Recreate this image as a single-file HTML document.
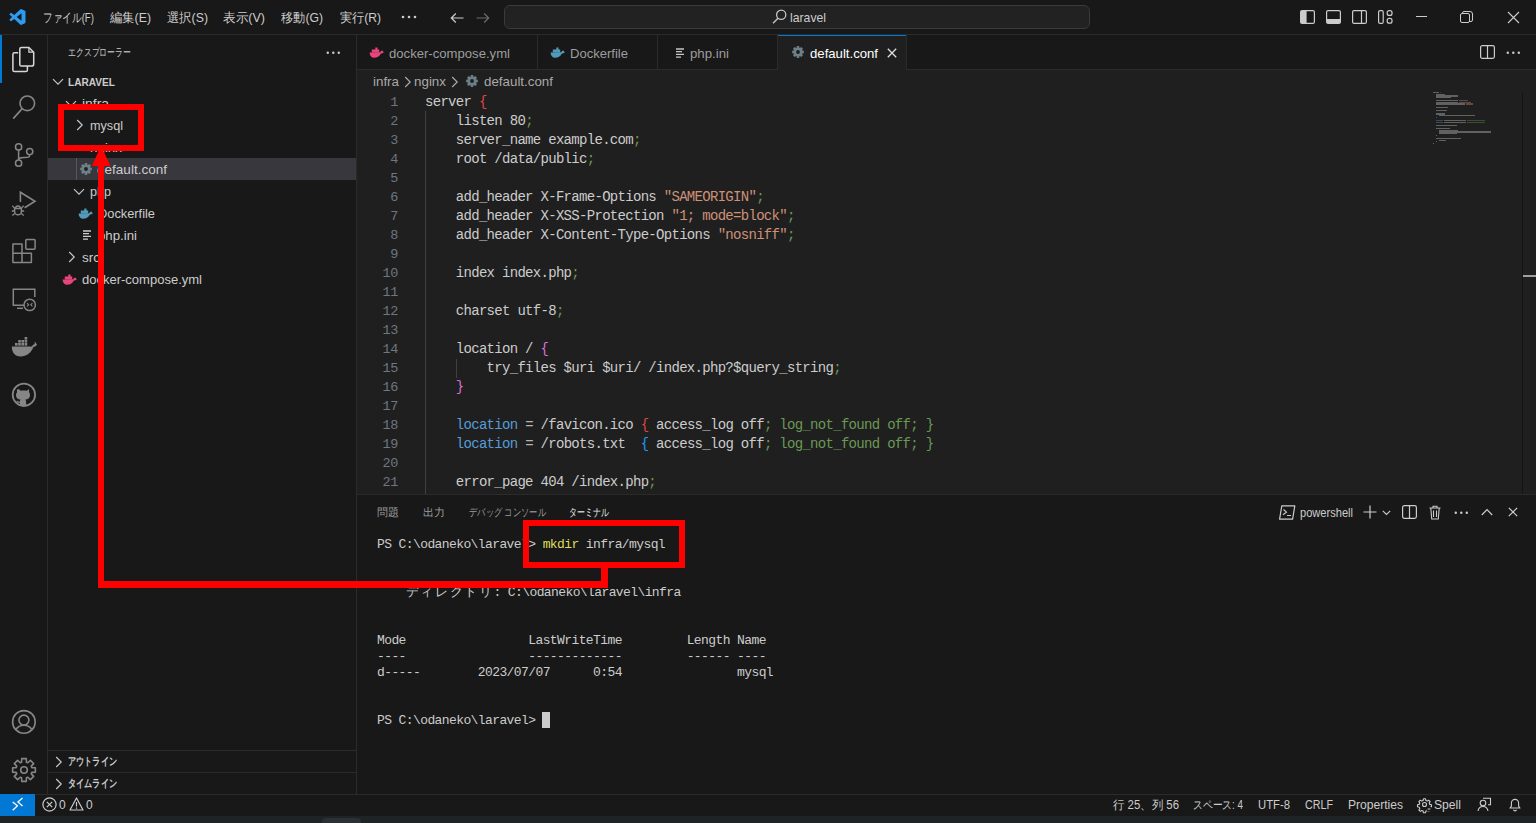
<!DOCTYPE html>
<html><head><meta charset="utf-8"><title>vscode</title><style>*{box-sizing:border-box;margin:0;padding:0}
html,body{width:1536px;height:823px;overflow:hidden;background:#181818}
body{position:relative;font-family:"Liberation Sans",sans-serif;color:#cccccc;font-size:13px}
.a{position:absolute;white-space:pre}
svg.a{overflow:visible}
</style></head><body>
<div class="a" style="left:0px;top:0px;width:1536px;height:34px;background:#181818;"></div>
<div class="a" style="left:0px;top:34px;width:1536px;height:1px;background:#2b2b2b;"></div>
<div class="a" style="left:0px;top:35px;width:47px;height:759px;background:#181818;"></div>
<div class="a" style="left:47px;top:35px;width:1px;height:759px;background:#2b2b2b;"></div>
<div class="a" style="left:48px;top:35px;width:308px;height:759px;background:#181818;"></div>
<div class="a" style="left:356px;top:35px;width:1px;height:759px;background:#2b2b2b;"></div>
<div class="a" style="left:357px;top:35px;width:1179px;height:34px;background:#181818;"></div>
<div class="a" style="left:357px;top:69px;width:1179px;height:1px;background:#2b2b2b;"></div>
<div class="a" style="left:357px;top:70px;width:1179px;height:424px;background:#1f1f1f;"></div>
<div class="a" style="left:357px;top:494px;width:1179px;height:1px;background:#2b2b2b;"></div>
<div class="a" style="left:357px;top:495px;width:1179px;height:299px;background:#181818;"></div>
<div class="a" style="left:0px;top:794px;width:1536px;height:1px;background:#2b2b2b;"></div>
<div class="a" style="left:0px;top:795px;width:1536px;height:21px;background:#181818;"></div>
<div class="a" style="left:0px;top:816px;width:1536px;height:7px;background:#1e2326;"></div>
<div class="a" style="left:322px;top:818px;width:39px;height:5px;background:#2a3034;border-radius:4px 4px 0 0"></div>
<svg class="a" style="left:9px;top:9px" width="17" height="16" viewBox="0 0 100 100"><path fill="#2d9bf0" d="M96.46 10.8L75.86.87a6.23 6.23 0 0 0-7.1 1.2L29.35 38.04 12.19 25.01a4.16 4.16 0 0 0-5.32.24l-5.5 5a4.17 4.17 0 0 0 0 6.16L16.26 50 1.37 63.58a4.17 4.17 0 0 0 0 6.16l5.5 5a4.16 4.16 0 0 0 5.32.24l17.16-13.03 39.41 35.97a6.22 6.22 0 0 0 7.1 1.2l20.6-9.92A6.25 6.25 0 0 0 100 83.56V16.44a6.25 6.25 0 0 0-3.54-5.64zM75.01 72.7L45.11 50l29.9-22.7v45.4z"/></svg>
<div class="a" style="left:43px;top:9px;font-size:13px;line-height:17px;color:#cccccc;font-family:'Liberation Sans',sans-serif;"><span id="f1" class="fs" style="display:inline-block;transform-origin:0 0;transform:scaleX(0.7433)">ファイル(F)</span></div>
<div class="a" style="left:110px;top:9px;font-size:13px;line-height:17px;color:#cccccc;font-family:'Liberation Sans',sans-serif;"><span id="f2" class="fs" style="display:inline-block;transform-origin:0 0;transform:scaleX(0.9459)">編集(E)</span></div>
<div class="a" style="left:167px;top:9px;font-size:13px;line-height:17px;color:#cccccc;font-family:'Liberation Sans',sans-serif;"><span id="f3" class="fs" style="display:inline-block;transform-origin:0 0;transform:scaleX(0.9459)">選択(S)</span></div>
<div class="a" style="left:223px;top:9px;font-size:13px;line-height:17px;color:#cccccc;font-family:'Liberation Sans',sans-serif;"><span id="f4" class="fs" style="display:inline-block;transform-origin:0 0;transform:scaleX(0.9690)">表示(V)</span></div>
<div class="a" style="left:281px;top:9px;font-size:13px;line-height:17px;color:#cccccc;font-family:'Liberation Sans',sans-serif;"><span id="f5" class="fs" style="display:inline-block;transform-origin:0 0;transform:scaleX(0.9379)">移動(G)</span></div>
<div class="a" style="left:340px;top:9px;font-size:13px;line-height:17px;color:#cccccc;font-family:'Liberation Sans',sans-serif;"><span id="f6" class="fs" style="display:inline-block;transform-origin:0 0;transform:scaleX(0.9308)">実行(R)</span></div>
<svg class="a" style="left:401px;top:15px" width="16" height="4" viewBox="0 0 16 4"><circle cx="2" cy="2" r="1.3" fill="#ccc"/><circle cx="8" cy="2" r="1.3" fill="#ccc"/><circle cx="14" cy="2" r="1.3" fill="#ccc"/></svg>
<svg class="a" style="left:449px;top:10px" width="16" height="16" viewBox="0 0 16 16"><path d="M14.5 8H2.3M6.8 3.5L2.3 8 6.8 12.5" stroke="#cccccc" stroke-width="1.2" fill="none"/></svg>
<svg class="a" style="left:475px;top:10px" width="16" height="16" viewBox="0 0 16 16"><path d="M1.5 8h12.2M9.2 3.5L13.7 8 9.2 12.5" stroke="#6b6b6b" stroke-width="1.2" fill="none"/></svg>
<div class="a" style="left:504px;top:5px;width:586px;height:24px;background:#222222;border:1px solid #3a3a3a;border-radius:6px"></div>
<svg class="a" style="left:772px;top:9px" width="15" height="15" viewBox="0 0 15 15"><circle cx="9.2" cy="5.8" r="4.6" stroke="#c4c4c4" stroke-width="1.3" fill="none"/><path d="M6 9.2L1 14.3" stroke="#c4c4c4" stroke-width="1.4"/></svg>
<div class="a" style="left:790px;top:9px;font-size:13px;line-height:17px;color:#cccccc;font-family:'Liberation Sans',sans-serif;"><span id="f7" class="fs" style="display:inline-block;transform-origin:0 0;transform:scaleX(0.9400)">laravel</span></div>
<svg class="a" style="left:1300px;top:10px" width="15" height="14" viewBox="0 0 15 14"><rect x="0.6" y="0.6" width="13.8" height="12.8" rx="1.5" stroke="#cccccc" stroke-width="1.2" fill="none"/><rect x="1" y="1" width="5" height="12" fill="#cccccc"/><path d="M6 1v12" stroke="#cccccc" stroke-width="1.2"/></svg>
<svg class="a" style="left:1326px;top:10px" width="15" height="14" viewBox="0 0 15 14"><rect x="0.6" y="0.6" width="13.8" height="12.8" rx="1.5" stroke="#cccccc" stroke-width="1.2" fill="none"/><rect x="1" y="9" width="13" height="4" fill="#cccccc"/></svg>
<svg class="a" style="left:1352px;top:10px" width="15" height="14" viewBox="0 0 15 14"><rect x="0.6" y="0.6" width="13.8" height="12.8" rx="1.5" stroke="#cccccc" stroke-width="1.2" fill="none"/><path d="M9.5 1v12" stroke="#cccccc" stroke-width="1.2"/></svg>
<svg class="a" style="left:1378px;top:10px" width="15" height="14" viewBox="0 0 15 14"><rect x="0.6" y="0.6" width="4.6" height="12.8" rx="1.5" stroke="#cccccc" stroke-width="1.2" fill="none"/><rect x="9.2" y="0.6" width="4.8" height="4.8" rx="2" stroke="#cccccc" stroke-width="1.2" fill="none"/><rect x="9.2" y="8.4" width="4.8" height="4.8" rx="2" stroke="#cccccc" stroke-width="1.2" fill="none"/></svg>
<div class="a" style="left:1416px;top:16px;width:11px;height:1px;background:#cccccc;"></div>
<svg class="a" style="left:1460px;top:11px" width="13" height="12" viewBox="0 0 13 12"><rect x="0.5" y="2.5" width="9" height="9" rx="1.5" stroke="#cccccc" stroke-width="1" fill="none"/><path d="M2.5 2.5V2A1.5 1.5 0 0 1 4 0.5h6A2.5 2.5 0 0 1 12.5 3v6A1.5 1.5 0 0 1 11 10.5h-1.5" stroke="#cccccc" stroke-width="1" fill="none"/></svg>
<svg class="a" style="left:1507px;top:11px" width="13" height="13" viewBox="0 0 13 13"><path d="M1 1L12 12M12 1L1 12" stroke="#cccccc" stroke-width="1.1"/></svg>
<div class="a" style="left:0px;top:35px;width:2px;height:48px;background:#0078d4;"></div>
<svg class="a" style="left:12px;top:46px" width="24" height="27" viewBox="0 0 24 27"><g transform="translate(1.6,0.4)"><path d="M7.8 1h7.5l4.8 4.8v11.7a2.2 2.2 0 0 1-2.2 2.2H7.8A1.6 1.6 0 0 1 6.2 18.1V2.6A1.6 1.6 0 0 1 7.8 1z" stroke="#d7d7d7" stroke-width="1.5" fill="none"/><path d="M15.3 1.5v4.3h4.3" stroke="#d7d7d7" stroke-width="1.2" fill="none"/></g><path d="M6.2 6.8H2.5A1.6 1.6 0 0 0 0.9 8.4v15.5a1.6 1.6 0 0 0 1.6 1.6h11.3a1.6 1.6 0 0 0 1.6-1.6v-4" stroke="#d7d7d7" stroke-width="1.5" fill="none"/></svg>
<svg class="a" style="left:12px;top:94px" width="26" height="27" viewBox="0 0 26 27"><circle cx="15.3" cy="9.3" r="7.3" stroke="#868686" stroke-width="1.6" fill="none"/><path d="M10.2 14.6L1.2 24.6" stroke="#868686" stroke-width="1.6"/></svg>
<svg class="a" style="left:12px;top:140px" width="24" height="28" viewBox="0 0 24 28"><circle cx="6.6" cy="6.9" r="3.1" stroke="#868686" stroke-width="1.5" fill="none"/><circle cx="6.6" cy="23.2" r="3.1" stroke="#868686" stroke-width="1.5" fill="none"/><circle cx="17.7" cy="11.6" r="3.1" stroke="#868686" stroke-width="1.5" fill="none"/><path d="M6.6 10v10.1M17.7 14.7c0 3-2 2.7-6 2.7-3 0-5.1 1-5.1 2.5" stroke="#868686" stroke-width="1.5" fill="none"/></svg>
<svg class="a" style="left:10px;top:190px" width="28" height="28" viewBox="0 0 28 28"><path d="M10.4 12V2.2L25 11.3 14.6 17.8" stroke="#868686" stroke-width="1.6" fill="none" stroke-linejoin="miter"/><path d="M4.6 18.6h6.8v2.8a3.4 3.4 0 0 1-6.8 0z" stroke="#868686" stroke-width="1.5" fill="none"/><path d="M5.6 18.4a2.4 2.4 0 0 1 4.8 0" stroke="#868686" stroke-width="1.4" fill="none"/><path d="M2.3 15.8l2.3 2.3M13.7 15.8l-2.3 2.3M1.8 21h2.8M11.4 21h2.8M2.3 25.6l2.4-2M13.7 25.6l-2.4-2" stroke="#868686" stroke-width="1.3" fill="none"/></svg>
<svg class="a" style="left:12px;top:238px" width="25" height="26" viewBox="0 0 25 26"><path d="M0.9 5.9h9.1v9.3H19.4v9.2H0.9z M0.9 15.2H10v9.2" stroke="#868686" stroke-width="1.5" fill="none" stroke-linejoin="round"/><rect x="13.8" y="1.6" width="9.3" height="9.6" rx="1" stroke="#868686" stroke-width="1.5" fill="none"/></svg>
<svg class="a" style="left:12px;top:288px" width="25" height="25" viewBox="0 0 25 25"><path d="M12 17.3H1.3V1.3h21.5V9" stroke="#868686" stroke-width="1.5" fill="none"/><path d="M5 20.3h6" stroke="#868686" stroke-width="1.5"/><circle cx="17.7" cy="16.9" r="5.7" stroke="#868686" stroke-width="1.5" fill="none"/><path d="M15 15.2l1.6 1.6-1.6 1.6M20.4 15.2l-1.6 1.6 1.6 1.6" stroke="#868686" stroke-width="1.1" fill="none"/></svg>
<svg class="a" style="left:11px;top:337px" width="26" height="21" viewBox="0 0 26 21"><path fill="#868686" d="M0.8 9.5h20.2c0.6-1.4 1.6-2.4 3-2.4 -0.5-0.6-0.6-1.6-0.4-2.4 1.2 0.6 1.8 1.6 1.9 2.6 0.4 0 0.6 0.4 0.3 0.8 -0.8 1.2-2 1.8-3.4 1.9 -2 5.4-6.6 9.5-13 9.5 -5.2 0-8.5-3.6-8.6-9.9z"/><rect x="4" y="6" width="2.6" height="2.6" fill="#868686"/><rect x="7.2" y="6" width="2.6" height="2.6" fill="#868686"/><rect x="10.4" y="6" width="2.6" height="2.6" fill="#868686"/><rect x="13.6" y="6" width="2.6" height="2.6" fill="#868686"/><rect x="7.2" y="3" width="2.6" height="2.6" fill="#868686"/><rect x="10.4" y="3" width="2.6" height="2.6" fill="#868686"/><rect x="13.6" y="3" width="2.6" height="2.6" fill="#868686"/><rect x="13.6" y="0" width="2.6" height="2.6" fill="#868686"/></svg>
<svg class="a" style="left:11px;top:382px" width="26" height="26" viewBox="0 0 26 26"><circle cx="12.9" cy="12.8" r="11.2" stroke="#868686" stroke-width="1.8" fill="none"/><path fill="#868686" d="M8 7.2l1.6 1.6c1.9-0.5 4.6-0.5 6.4 0l1.7-1.7c0.5 1 0.6 2.1 0.3 3 0.6 0.7 1 1.7 1 2.8 0 3.2-2 4.3-4.7 4.6 0.6 0.6 0.8 1.3 0.8 2.2v4.1h-6.3v-3c-1.6 0.3-2.9-0.4-3.6-1.9l1.4-0.2c0.6 0.8 1.3 1.1 2.3 0.8 0-0.8 0.3-1.4 0.7-1.9-2.6-0.3-4.6-1.4-4.6-4.6 0-1.1 0.4-2.1 1-2.8-0.3-0.9-0.2-2 0.3-3z"/></svg>
<svg class="a" style="left:11px;top:709px" width="26" height="26" viewBox="0 0 26 26"><circle cx="12.9" cy="12.9" r="11.3" stroke="#868686" stroke-width="1.6" fill="none"/><circle cx="12.9" cy="11.1" r="5" stroke="#868686" stroke-width="1.6" fill="none"/><path d="M5 20.5c1.6-2.6 4.6-4.2 7.9-4.2s6.3 1.6 7.9 4.2" stroke="#868686" stroke-width="1.6" fill="none"/></svg>
<svg class="a" style="left:11px;top:757px" width="26" height="26" viewBox="0 0 26 26"><polygon points="10.58,5.17 10.70,1.63 15.30,1.63 15.42,5.17 16.83,5.75 19.41,3.33 22.67,6.59 20.25,9.17 20.83,10.58 24.37,10.70 24.37,15.30 20.83,15.42 20.25,16.83 22.67,19.41 19.41,22.67 16.83,20.25 15.42,20.83 15.30,24.37 10.70,24.37 10.58,20.83 9.17,20.25 6.59,22.67 3.33,19.41 5.75,16.83 5.17,15.42 1.63,15.30 1.63,10.70 5.17,10.58 5.75,9.17 3.33,6.59 6.59,3.33 9.17,5.75" stroke="#868686" stroke-width="1.6" fill="none" stroke-linejoin="round"/><circle cx="13" cy="13" r="3.3" stroke="#868686" stroke-width="1.6" fill="none"/></svg>
<div class="a" style="left:68px;top:45px;font-size:11px;line-height:14px;color:#cccccc;font-family:'Liberation Sans',sans-serif;"><span id="f8" class="fs" style="display:inline-block;transform-origin:0 0;transform:scaleX(0.7159)">エクスプローラー</span></div>
<svg class="a" style="left:326px;top:51px" width="15" height="4" viewBox="0 0 15 4"><circle cx="1.8" cy="1.8" r="1.2" fill="#ccc"/><circle cx="7.3" cy="1.8" r="1.2" fill="#ccc"/><circle cx="12.8" cy="1.8" r="1.2" fill="#ccc"/></svg>
<svg class="a" style="left:52px;top:78px" width="12" height="8" viewBox="0 0 12 8"><path d="M1 1.2l5 5 5-5" stroke="#c5c5c5" stroke-width="1.2" fill="none"/></svg>
<div class="a" style="left:68px;top:75px;font-size:11px;line-height:14px;color:#cccccc;font-family:'Liberation Sans',sans-serif;font-weight:700;"><span id="f9" class="fs" style="display:inline-block;transform-origin:0 0;transform:scaleX(0.9190)">LARAVEL</span></div>
<div class="a" style="left:48px;top:158px;width:308px;height:22px;background:#37373d;"></div>
<div class="a" style="left:76px;top:158px;width:1px;height:22px;background:#585858;"></div>
<svg class="a" style="left:65px;top:100px" width="12" height="8" viewBox="0 0 12 8"><path d="M1 1.2l5 5 5-5" stroke="#c5c5c5" stroke-width="1.2" fill="none"/></svg>
<div class="a" style="left:82px;top:96px;font-size:13px;line-height:16px;color:#cccccc;font-family:'Liberation Sans',sans-serif;"><span id="f10" class="fs" style="display:inline-block;transform-origin:0 0;transform:scaleX(1.0673)">infra</span></div>
<svg class="a" style="left:76px;top:119px" width="8" height="12" viewBox="0 0 8 12"><path d="M1.2 1l5 5-5 5" stroke="#c5c5c5" stroke-width="1.2" fill="none"/></svg>
<div class="a" style="left:90px;top:118px;font-size:13px;line-height:16px;color:#cccccc;font-family:'Liberation Sans',sans-serif;"><span id="f11" class="fs" style="display:inline-block;transform-origin:0 0;transform:scaleX(0.9719)">mysql</span></div>
<svg class="a" style="left:74px;top:144px" width="12" height="8" viewBox="0 0 12 8"><path d="M1 1.2l5 5 5-5" stroke="#c5c5c5" stroke-width="1.2" fill="none"/></svg>
<div class="a" style="left:90px;top:140px;font-size:13px;line-height:16px;color:#cccccc;font-family:'Liberation Sans',sans-serif;"><span id="f12" class="fs" style="display:inline-block;transform-origin:0 0;transform:scaleX(1.0297)">nginx</span></div>
<svg class="a" style="left:80px;top:163px" width="12" height="12" viewBox="0 0 12 12"><polygon points="10.07,4.56 11.88,4.81 11.88,7.19 10.07,7.44 9.90,7.86 11.00,9.32 9.32,11.00 7.86,9.90 7.44,10.07 7.19,11.88 4.81,11.88 4.56,10.07 4.14,9.90 2.68,11.00 1.00,9.32 2.10,7.86 1.93,7.44 0.12,7.19 0.12,4.81 1.93,4.56 2.10,4.14 1.00,2.68 2.68,1.00 4.14,2.10 4.56,1.93 4.81,0.12 7.19,0.12 7.44,1.93 7.86,2.10 9.32,1.00 11.00,2.68 9.90,4.14" fill="#6d8086"/><circle cx="6" cy="6" r="1.9" fill="#1f1f1f"/></svg>
<div class="a" style="left:97px;top:162px;font-size:13px;line-height:16px;color:#cccccc;font-family:'Liberation Sans',sans-serif;"><span id="f13" class="fs" style="display:inline-block;transform-origin:0 0;transform:scaleX(1.0414)">default.conf</span></div>
<svg class="a" style="left:73px;top:188px" width="12" height="8" viewBox="0 0 12 8"><path d="M1 1.2l5 5 5-5" stroke="#c5c5c5" stroke-width="1.2" fill="none"/></svg>
<div class="a" style="left:90px;top:184px;font-size:13px;line-height:16px;color:#cccccc;font-family:'Liberation Sans',sans-serif;"><span id="f14" class="fs" style="display:inline-block;transform-origin:0 0;transform:scaleX(0.9676)">php</span></div>
<svg class="a" style="left:78px;top:208px" width="15" height="11" viewBox="0 0 15 11"><path fill="#519aba" d="M0.6 5.4L11.2 5.2C11.8 4.2 12.6 3.3 13.3 3.5L14.9 5.5C13.9 6.1 12.7 6.5 11.7 6.7C10.6 9.2 8 10.7 5 10.7C2.4 10.7 0.7 8.6 0.6 5.4z"/><path fill="#519aba" d="M2.8 2.4h7.4v3.2H2.8zM6.3 0.6h2.2v2.2H6.3z"/></svg>
<div class="a" style="left:98px;top:206px;font-size:13px;line-height:16px;color:#cccccc;font-family:'Liberation Sans',sans-serif;"><span id="f15" class="fs" style="display:inline-block;transform-origin:0 0;transform:scaleX(0.9862)">Dockerfile</span></div>
<svg class="a" style="left:83px;top:230px" width="9" height="10" viewBox="0 0 9 10"><path d="M0 1h8M0 3.7h6M0 6.4h8M0 9.1h5" stroke="#cccccc" stroke-width="1.3"/></svg>
<div class="a" style="left:98px;top:228px;font-size:13px;line-height:16px;color:#cccccc;font-family:'Liberation Sans',sans-serif;"><span id="f16" class="fs" style="display:inline-block;transform-origin:0 0;transform:scaleX(1.0179)">php.ini</span></div>
<svg class="a" style="left:68px;top:251px" width="8" height="12" viewBox="0 0 8 12"><path d="M1.2 1l5 5-5 5" stroke="#c5c5c5" stroke-width="1.2" fill="none"/></svg>
<div class="a" style="left:82px;top:250px;font-size:13px;line-height:16px;color:#cccccc;font-family:'Liberation Sans',sans-serif;"><span id="f17" class="fs" style="display:inline-block;transform-origin:0 0;transform:scaleX(1.0378)">src</span></div>
<svg class="a" style="left:62px;top:274px" width="15" height="11" viewBox="0 0 15 11"><path fill="#e8457a" d="M0.6 5.4L11.2 5.2C11.8 4.2 12.6 3.3 13.3 3.5L14.9 5.5C13.9 6.1 12.7 6.5 11.7 6.7C10.6 9.2 8 10.7 5 10.7C2.4 10.7 0.7 8.6 0.6 5.4z"/><path fill="#e8457a" d="M2.8 2.4h7.4v3.2H2.8zM6.3 0.6h2.2v2.2H6.3z"/></svg>
<div class="a" style="left:82px;top:272px;font-size:13px;line-height:16px;color:#cccccc;font-family:'Liberation Sans',sans-serif;"><span id="f18" class="fs" style="display:inline-block;transform-origin:0 0;transform:scaleX(1.0005)">docker-compose.yml</span></div>
<div class="a" style="left:48px;top:750px;width:308px;height:1px;background:#2b2b2b;"></div>
<div class="a" style="left:48px;top:772px;width:308px;height:1px;background:#2b2b2b;"></div>
<svg class="a" style="left:55px;top:756px" width="8" height="12" viewBox="0 0 8 12"><path d="M1.2 1l5 5-5 5" stroke="#c5c5c5" stroke-width="1.2" fill="none"/></svg>
<div class="a" style="left:68px;top:754px;font-size:11px;line-height:14px;color:#cccccc;font-family:'Liberation Sans',sans-serif;font-weight:700;"><span id="f19" class="fs" style="display:inline-block;transform-origin:0 0;transform:scaleX(0.7424)">アウトライン</span></div>
<svg class="a" style="left:55px;top:778px" width="8" height="12" viewBox="0 0 8 12"><path d="M1.2 1l5 5-5 5" stroke="#c5c5c5" stroke-width="1.2" fill="none"/></svg>
<div class="a" style="left:68px;top:776px;font-size:11px;line-height:14px;color:#cccccc;font-family:'Liberation Sans',sans-serif;font-weight:700;"><span id="f20" class="fs" style="display:inline-block;transform-origin:0 0;transform:scaleX(0.7424)">タイムライン</span></div>
<div class="a" style="left:537px;top:35px;width:1px;height:34px;background:#2b2b2b;"></div>
<div class="a" style="left:657px;top:35px;width:1px;height:34px;background:#2b2b2b;"></div>
<div class="a" style="left:777px;top:35px;width:1px;height:35px;background:#2b2b2b;"></div>
<div class="a" style="left:906px;top:35px;width:1px;height:35px;background:#2b2b2b;"></div>
<div class="a" style="left:778px;top:35px;width:128px;height:35px;background:#1f1f1f;"></div>
<div class="a" style="left:778px;top:35px;width:128px;height:1px;background:#0078d4;"></div>
<svg class="a" style="left:369px;top:47px" width="15" height="11" viewBox="0 0 15 11"><path fill="#e8457a" d="M0.6 5.4L11.2 5.2C11.8 4.2 12.6 3.3 13.3 3.5L14.9 5.5C13.9 6.1 12.7 6.5 11.7 6.7C10.6 9.2 8 10.7 5 10.7C2.4 10.7 0.7 8.6 0.6 5.4z"/><path fill="#e8457a" d="M2.8 2.4h7.4v3.2H2.8zM6.3 0.6h2.2v2.2H6.3z"/></svg>
<div class="a" style="left:389px;top:46px;font-size:13px;line-height:16px;color:#9d9d9d;font-family:'Liberation Sans',sans-serif;"><span id="f21" class="fs" style="display:inline-block;transform-origin:0 0;transform:scaleX(1.0089)">docker-compose.yml</span></div>
<svg class="a" style="left:550px;top:47px" width="15" height="11" viewBox="0 0 15 11"><path fill="#519aba" d="M0.6 5.4L11.2 5.2C11.8 4.2 12.6 3.3 13.3 3.5L14.9 5.5C13.9 6.1 12.7 6.5 11.7 6.7C10.6 9.2 8 10.7 5 10.7C2.4 10.7 0.7 8.6 0.6 5.4z"/><path fill="#519aba" d="M2.8 2.4h7.4v3.2H2.8zM6.3 0.6h2.2v2.2H6.3z"/></svg>
<div class="a" style="left:570px;top:46px;font-size:13px;line-height:16px;color:#9d9d9d;font-family:'Liberation Sans',sans-serif;"><span id="f22" class="fs" style="display:inline-block;transform-origin:0 0;transform:scaleX(1.0035)">Dockerfile</span></div>
<svg class="a" style="left:676px;top:48px" width="9" height="10" viewBox="0 0 9 10"><path d="M0 1h8M0 3.7h6M0 6.4h8M0 9.1h5" stroke="#c5c5c5" stroke-width="1.3"/></svg>
<div class="a" style="left:690px;top:46px;font-size:13px;line-height:16px;color:#9d9d9d;font-family:'Liberation Sans',sans-serif;"><span id="f23" class="fs" style="display:inline-block;transform-origin:0 0;transform:scaleX(1.0179)">php.ini</span></div>
<svg class="a" style="left:792px;top:46px" width="12" height="12" viewBox="0 0 12 12"><polygon points="10.07,4.56 11.88,4.81 11.88,7.19 10.07,7.44 9.90,7.86 11.00,9.32 9.32,11.00 7.86,9.90 7.44,10.07 7.19,11.88 4.81,11.88 4.56,10.07 4.14,9.90 2.68,11.00 1.00,9.32 2.10,7.86 1.93,7.44 0.12,7.19 0.12,4.81 1.93,4.56 2.10,4.14 1.00,2.68 2.68,1.00 4.14,2.10 4.56,1.93 4.81,0.12 7.19,0.12 7.44,1.93 7.86,2.10 9.32,1.00 11.00,2.68 9.90,4.14" fill="#6d8086"/><circle cx="6" cy="6" r="1.9" fill="#1f1f1f"/></svg>
<div class="a" style="left:810px;top:46px;font-size:13px;line-height:16px;color:#ffffff;font-family:'Liberation Sans',sans-serif;"><span id="f24" class="fs" style="display:inline-block;transform-origin:0 0;transform:scaleX(1.0116)">default.conf</span></div>
<svg class="a" style="left:887px;top:48px" width="10" height="10" viewBox="0 0 10 10"><path d="M0.8 0.8l8.4 8.4M9.2 0.8L0.8 9.2" stroke="#e0e0e0" stroke-width="1.3"/></svg>
<svg class="a" style="left:1480px;top:45px" width="15" height="14" viewBox="0 0 15 14"><rect x="0.6" y="0.6" width="13.8" height="12.8" rx="1.8" stroke="#cccccc" stroke-width="1.2" fill="none"/><path d="M7.5 1v12" stroke="#ccc" stroke-width="1.2"/></svg>
<svg class="a" style="left:1506px;top:51px" width="15" height="4" viewBox="0 0 15 4"><circle cx="1.8" cy="1.8" r="1.2" fill="#ccc"/><circle cx="7.3" cy="1.8" r="1.2" fill="#ccc"/><circle cx="12.8" cy="1.8" r="1.2" fill="#ccc"/></svg>
<div class="a" style="left:373px;top:74px;font-size:13px;line-height:16px;color:#a9a9a9;font-family:'Liberation Sans',sans-serif;"><span id="f25" class="fs" style="display:inline-block;transform-origin:0 0;transform:scaleX(1.0278)">infra</span></div>
<svg class="a" style="left:404px;top:76px" width="8" height="12" viewBox="0 0 8 12"><path d="M1.2 1l5 5-5 5" stroke="#a9a9a9" stroke-width="1.2" fill="none"/></svg>
<div class="a" style="left:414px;top:74px;font-size:13px;line-height:16px;color:#a9a9a9;font-family:'Liberation Sans',sans-serif;"><span id="f26" class="fs" style="display:inline-block;transform-origin:0 0;transform:scaleX(1.0297)">nginx</span></div>
<svg class="a" style="left:451px;top:76px" width="8" height="12" viewBox="0 0 8 12"><path d="M1.2 1l5 5-5 5" stroke="#a9a9a9" stroke-width="1.2" fill="none"/></svg>
<svg class="a" style="left:466px;top:75px" width="12" height="12" viewBox="0 0 12 12"><polygon points="10.07,4.56 11.88,4.81 11.88,7.19 10.07,7.44 9.90,7.86 11.00,9.32 9.32,11.00 7.86,9.90 7.44,10.07 7.19,11.88 4.81,11.88 4.56,10.07 4.14,9.90 2.68,11.00 1.00,9.32 2.10,7.86 1.93,7.44 0.12,7.19 0.12,4.81 1.93,4.56 2.10,4.14 1.00,2.68 2.68,1.00 4.14,2.10 4.56,1.93 4.81,0.12 7.19,0.12 7.44,1.93 7.86,2.10 9.32,1.00 11.00,2.68 9.90,4.14" fill="#6d8086"/><circle cx="6" cy="6" r="1.9" fill="#1f1f1f"/></svg>
<div class="a" style="left:484px;top:74px;font-size:13px;line-height:16px;color:#a9a9a9;font-family:'Liberation Sans',sans-serif;"><span id="f27" class="fs" style="display:inline-block;transform-origin:0 0;transform:scaleX(1.0265)">default.conf</span></div>
<div class="a" style="left:358px;top:93px;width:40px;text-align:right;font-family:'Liberation Mono',monospace;font-size:13.5px;letter-spacing:-0.4px;line-height:19px;color:#6e7681">1</div>
<div class="a" style="left:425px;top:93px;font-family:'Liberation Mono',monospace;font-size:14px;letter-spacing:-0.7px;line-height:19px;color:#cccccc">server <span style="color:#e04444">{</span></div>
<div class="a" style="left:358px;top:112px;width:40px;text-align:right;font-family:'Liberation Mono',monospace;font-size:13.5px;letter-spacing:-0.4px;line-height:19px;color:#6e7681">2</div>
<div class="a" style="left:425px;top:112px;font-family:'Liberation Mono',monospace;font-size:14px;letter-spacing:-0.7px;line-height:19px;color:#cccccc">    listen 80<span style="color:#6a9955">;</span></div>
<div class="a" style="left:358px;top:131px;width:40px;text-align:right;font-family:'Liberation Mono',monospace;font-size:13.5px;letter-spacing:-0.4px;line-height:19px;color:#6e7681">3</div>
<div class="a" style="left:425px;top:131px;font-family:'Liberation Mono',monospace;font-size:14px;letter-spacing:-0.7px;line-height:19px;color:#cccccc">    server_name example.com<span style="color:#6a9955">;</span></div>
<div class="a" style="left:358px;top:150px;width:40px;text-align:right;font-family:'Liberation Mono',monospace;font-size:13.5px;letter-spacing:-0.4px;line-height:19px;color:#6e7681">4</div>
<div class="a" style="left:425px;top:150px;font-family:'Liberation Mono',monospace;font-size:14px;letter-spacing:-0.7px;line-height:19px;color:#cccccc">    root /data/public<span style="color:#6a9955">;</span></div>
<div class="a" style="left:358px;top:169px;width:40px;text-align:right;font-family:'Liberation Mono',monospace;font-size:13.5px;letter-spacing:-0.4px;line-height:19px;color:#6e7681">5</div>
<div class="a" style="left:358px;top:188px;width:40px;text-align:right;font-family:'Liberation Mono',monospace;font-size:13.5px;letter-spacing:-0.4px;line-height:19px;color:#6e7681">6</div>
<div class="a" style="left:425px;top:188px;font-family:'Liberation Mono',monospace;font-size:14px;letter-spacing:-0.7px;line-height:19px;color:#cccccc">    add_header X-Frame-Options <span style="color:#ce9178">&quot;SAMEORIGIN&quot;</span><span style="color:#6a9955">;</span></div>
<div class="a" style="left:358px;top:207px;width:40px;text-align:right;font-family:'Liberation Mono',monospace;font-size:13.5px;letter-spacing:-0.4px;line-height:19px;color:#6e7681">7</div>
<div class="a" style="left:425px;top:207px;font-family:'Liberation Mono',monospace;font-size:14px;letter-spacing:-0.7px;line-height:19px;color:#cccccc">    add_header X-XSS-Protection <span style="color:#ce9178">&quot;1; mode=block&quot;</span><span style="color:#6a9955">;</span></div>
<div class="a" style="left:358px;top:226px;width:40px;text-align:right;font-family:'Liberation Mono',monospace;font-size:13.5px;letter-spacing:-0.4px;line-height:19px;color:#6e7681">8</div>
<div class="a" style="left:425px;top:226px;font-family:'Liberation Mono',monospace;font-size:14px;letter-spacing:-0.7px;line-height:19px;color:#cccccc">    add_header X-Content-Type-Options <span style="color:#ce9178">&quot;nosniff&quot;</span><span style="color:#6a9955">;</span></div>
<div class="a" style="left:358px;top:245px;width:40px;text-align:right;font-family:'Liberation Mono',monospace;font-size:13.5px;letter-spacing:-0.4px;line-height:19px;color:#6e7681">9</div>
<div class="a" style="left:358px;top:264px;width:40px;text-align:right;font-family:'Liberation Mono',monospace;font-size:13.5px;letter-spacing:-0.4px;line-height:19px;color:#6e7681">10</div>
<div class="a" style="left:425px;top:264px;font-family:'Liberation Mono',monospace;font-size:14px;letter-spacing:-0.7px;line-height:19px;color:#cccccc">    index index.php<span style="color:#6a9955">;</span></div>
<div class="a" style="left:358px;top:283px;width:40px;text-align:right;font-family:'Liberation Mono',monospace;font-size:13.5px;letter-spacing:-0.4px;line-height:19px;color:#6e7681">11</div>
<div class="a" style="left:358px;top:302px;width:40px;text-align:right;font-family:'Liberation Mono',monospace;font-size:13.5px;letter-spacing:-0.4px;line-height:19px;color:#6e7681">12</div>
<div class="a" style="left:425px;top:302px;font-family:'Liberation Mono',monospace;font-size:14px;letter-spacing:-0.7px;line-height:19px;color:#cccccc">    charset utf-8<span style="color:#6a9955">;</span></div>
<div class="a" style="left:358px;top:321px;width:40px;text-align:right;font-family:'Liberation Mono',monospace;font-size:13.5px;letter-spacing:-0.4px;line-height:19px;color:#6e7681">13</div>
<div class="a" style="left:358px;top:340px;width:40px;text-align:right;font-family:'Liberation Mono',monospace;font-size:13.5px;letter-spacing:-0.4px;line-height:19px;color:#6e7681">14</div>
<div class="a" style="left:425px;top:340px;font-family:'Liberation Mono',monospace;font-size:14px;letter-spacing:-0.7px;line-height:19px;color:#cccccc">    location / <span style="color:#da70d6">{</span></div>
<div class="a" style="left:358px;top:359px;width:40px;text-align:right;font-family:'Liberation Mono',monospace;font-size:13.5px;letter-spacing:-0.4px;line-height:19px;color:#6e7681">15</div>
<div class="a" style="left:425px;top:359px;font-family:'Liberation Mono',monospace;font-size:14px;letter-spacing:-0.7px;line-height:19px;color:#cccccc">        try_files $uri $uri/ /index.php?$query_string<span style="color:#6a9955">;</span></div>
<div class="a" style="left:358px;top:378px;width:40px;text-align:right;font-family:'Liberation Mono',monospace;font-size:13.5px;letter-spacing:-0.4px;line-height:19px;color:#6e7681">16</div>
<div class="a" style="left:425px;top:378px;font-family:'Liberation Mono',monospace;font-size:14px;letter-spacing:-0.7px;line-height:19px;color:#cccccc">    <span style="color:#da70d6">}</span></div>
<div class="a" style="left:358px;top:397px;width:40px;text-align:right;font-family:'Liberation Mono',monospace;font-size:13.5px;letter-spacing:-0.4px;line-height:19px;color:#6e7681">17</div>
<div class="a" style="left:358px;top:416px;width:40px;text-align:right;font-family:'Liberation Mono',monospace;font-size:13.5px;letter-spacing:-0.4px;line-height:19px;color:#6e7681">18</div>
<div class="a" style="left:425px;top:416px;font-family:'Liberation Mono',monospace;font-size:14px;letter-spacing:-0.7px;line-height:19px;color:#cccccc">    <span style="color:#569cd6">location</span> <span style="color:#b4b4b4">=</span> /favicon.ico <span style="color:#e04444">{</span> access_log off<span style="color:#6a9955">; log_not_found off; }</span></div>
<div class="a" style="left:358px;top:435px;width:40px;text-align:right;font-family:'Liberation Mono',monospace;font-size:13.5px;letter-spacing:-0.4px;line-height:19px;color:#6e7681">19</div>
<div class="a" style="left:425px;top:435px;font-family:'Liberation Mono',monospace;font-size:14px;letter-spacing:-0.7px;line-height:19px;color:#cccccc">    <span style="color:#569cd6">location</span> <span style="color:#b4b4b4">=</span> /robots.txt  <span style="color:#179fff">{</span> access_log off<span style="color:#6a9955">; log_not_found off; }</span></div>
<div class="a" style="left:358px;top:454px;width:40px;text-align:right;font-family:'Liberation Mono',monospace;font-size:13.5px;letter-spacing:-0.4px;line-height:19px;color:#6e7681">20</div>
<div class="a" style="left:358px;top:473px;width:40px;text-align:right;font-family:'Liberation Mono',monospace;font-size:13.5px;letter-spacing:-0.4px;line-height:19px;color:#6e7681">21</div>
<div class="a" style="left:425px;top:473px;font-family:'Liberation Mono',monospace;font-size:14px;letter-spacing:-0.7px;line-height:19px;color:#cccccc">    error_page 404 /index.php<span style="color:#6a9955">;</span></div>
<div class="a" style="left:425px;top:111px;width:1px;height:383px;background:#404040;"></div>
<div class="a" style="left:456px;top:359px;width:1px;height:19px;background:#404040;"></div>
<div class="a" style="left:1522px;top:92px;width:1px;height:402px;background:#141414;"></div>
<div class="a" style="left:1523px;top:275px;width:13px;height:2px;background:#a0a0a0;"></div>
<div class="a" style="left:377px;top:505px;font-size:11px;line-height:14px;color:#9d9d9d;font-family:'Liberation Sans',sans-serif;"><span id="f28" class="fs" style="display:inline-block;transform-origin:0 0;transform:scaleX(1.0000)">問題</span></div>
<div class="a" style="left:423px;top:505px;font-size:11px;line-height:14px;color:#9d9d9d;font-family:'Liberation Sans',sans-serif;"><span id="f29" class="fs" style="display:inline-block;transform-origin:0 0;transform:scaleX(1.0000)">出力</span></div>
<div class="a" style="left:469px;top:505px;font-size:11px;line-height:14px;color:#9d9d9d;font-family:'Liberation Sans',sans-serif;"><span id="f30" class="fs" style="display:inline-block;transform-origin:0 0;transform:scaleX(0.7544)">デバッグ コンソール</span></div>
<div class="a" style="left:569px;top:505px;font-size:11px;line-height:14px;color:#e7e7e7;font-family:'Liberation Sans',sans-serif;"><span id="f31" class="fs" style="display:inline-block;transform-origin:0 0;transform:scaleX(0.7273)">ターミナル</span></div>
<svg class="a" style="left:1279px;top:505px" width="17" height="15" viewBox="0 0 17 15"><path d="M2.8 0.8h13l-2.2 13.4H0.6z" stroke="#cccccc" stroke-width="1.2" fill="none" stroke-linejoin="round"/><path d="M4.5 4.5l3 2.7-3.6 2.6M8 10.5h4" stroke="#cccccc" stroke-width="1.1" fill="none"/></svg>
<div class="a" style="left:1300px;top:506px;font-size:12px;line-height:15px;color:#cccccc;font-family:'Liberation Sans',sans-serif;"><span id="f32" class="fs" style="display:inline-block;transform-origin:0 0;transform:scaleX(0.9237)">powershell</span></div>
<svg class="a" style="left:1363px;top:505px" width="14" height="14" viewBox="0 0 14 14"><path d="M7 0.5v13M0.5 7h13" stroke="#cccccc" stroke-width="1.2"/></svg>
<svg class="a" style="left:1382px;top:510px" width="9" height="6" viewBox="0 0 9 6"><path d="M0.8 0.8l3.7 3.7 3.7-3.7" stroke="#cccccc" stroke-width="1.1" fill="none"/></svg>
<svg class="a" style="left:1402px;top:505px" width="15" height="14" viewBox="0 0 15 14"><rect x="0.6" y="0.6" width="13.8" height="12.8" rx="1.8" stroke="#cccccc" stroke-width="1.2" fill="none"/><path d="M7.5 1v12" stroke="#cccccc" stroke-width="1.2"/></svg>
<svg class="a" style="left:1429px;top:505px" width="12" height="15" viewBox="0 0 12 15"><path d="M0.5 3h11M4 3V1.2h4V3M1.8 3l0.9 11h6.6l0.9-11M4.5 5.5v6.5M7.5 5.5v6.5" stroke="#cccccc" stroke-width="1.1" fill="none"/></svg>
<svg class="a" style="left:1454px;top:511px" width="15" height="4" viewBox="0 0 15 4"><circle cx="1.8" cy="1.8" r="1.2" fill="#ccc"/><circle cx="7.3" cy="1.8" r="1.2" fill="#ccc"/><circle cx="12.8" cy="1.8" r="1.2" fill="#ccc"/></svg>
<svg class="a" style="left:1481px;top:508px" width="12" height="8" viewBox="0 0 12 8"><path d="M0.8 7l5.2-5.5 5.2 5.5" stroke="#cccccc" stroke-width="1.2" fill="none"/></svg>
<svg class="a" style="left:1508px;top:507px" width="10" height="10" viewBox="0 0 10 10"><path d="M0.8 0.8l8.4 8.4M9.2 0.8L0.8 9.2" stroke="#cccccc" stroke-width="1.2"/></svg>
<div class="a" style="left:377px;top:537px;font-family:'Liberation Mono',monospace;font-size:13px;letter-spacing:-0.6px;line-height:16px;color:#cccccc">PS C:\odaneko\laravel&gt; <span style="color:#dede5c">mkdir</span> infra/mysql</div>
<div class="a" style="left:377px;top:585px;font-family:'Liberation Mono',monospace;font-size:13px;letter-spacing:-0.6px;line-height:16px;color:#cccccc">    <span style="letter-spacing:1.6px">ディレクトリ</span>: C:\odaneko\laravel\infra</div>
<div class="a" style="left:377px;top:633px;font-family:'Liberation Mono',monospace;font-size:13px;letter-spacing:-0.6px;line-height:16px;color:#cccccc">Mode                 LastWriteTime         Length Name</div>
<div class="a" style="left:377px;top:649px;font-family:'Liberation Mono',monospace;font-size:13px;letter-spacing:-0.6px;line-height:16px;color:#cccccc">----                 -------------         ------ ----</div>
<div class="a" style="left:377px;top:665px;font-family:'Liberation Mono',monospace;font-size:13px;letter-spacing:-0.6px;line-height:16px;color:#cccccc">d-----        2023/07/07      0:54                mysql</div>
<div class="a" style="left:377px;top:713px;font-family:'Liberation Mono',monospace;font-size:13px;letter-spacing:-0.6px;line-height:16px;color:#cccccc">PS C:\odaneko\laravel&gt; </div>
<div class="a" style="left:542px;top:712px;width:8px;height:16px;background:#cccccc;"></div>
<div class="a" style="left:0px;top:794px;width:35px;height:22px;background:#0078d4;"></div>
<svg class="a" style="left:12px;top:797px" width="12" height="14" viewBox="0 0 12 14"><path d="M0.7 4.9l4.7 3.8-4.7 4.6M10.5 1L5.9 4.9l4.6 4.2" stroke="#ffffff" stroke-width="1.3" fill="none"/></svg>
<svg class="a" style="left:42px;top:797px" width="15" height="15" viewBox="0 0 15 15"><circle cx="7.5" cy="7.5" r="6.6" stroke="#cccccc" stroke-width="1.2" fill="none"/><path d="M4.8 4.8l5.4 5.4M10.2 4.8l-5.4 5.4" stroke="#ccc" stroke-width="1.2"/></svg>
<div class="a" style="left:59px;top:798px;font-size:12px;line-height:15px;color:#cccccc;font-family:'Liberation Sans',sans-serif;">0</div>
<svg class="a" style="left:69px;top:797px" width="15" height="14" viewBox="0 0 15 14"><path d="M7.5 1L14 13H1z" stroke="#cccccc" stroke-width="1.2" fill="none" stroke-linejoin="round"/><path d="M7.5 5v4.5M7.5 10.5v1.3" stroke="#ccc" stroke-width="1.2"/></svg>
<div class="a" style="left:86px;top:798px;font-size:12px;line-height:15px;color:#cccccc;font-family:'Liberation Sans',sans-serif;">0</div>
<div class="a" style="left:1113px;top:798px;font-size:12px;line-height:15px;color:#cccccc;font-family:'Liberation Sans',sans-serif;"><span id="f33" class="fs" style="display:inline-block;transform-origin:0 0;transform:scaleX(0.9514)">行 25、列 56</span></div>
<div class="a" style="left:1193px;top:798px;font-size:12px;line-height:15px;color:#cccccc;font-family:'Liberation Sans',sans-serif;"><span id="f34" class="fs" style="display:inline-block;transform-origin:0 0;transform:scaleX(0.8151)">スペース: 4</span></div>
<div class="a" style="left:1258px;top:798px;font-size:12px;line-height:15px;color:#cccccc;font-family:'Liberation Sans',sans-serif;"><span id="f35" class="fs" style="display:inline-block;transform-origin:0 0;transform:scaleX(0.9412)">UTF-8</span></div>
<div class="a" style="left:1305px;top:798px;font-size:12px;line-height:15px;color:#cccccc;font-family:'Liberation Sans',sans-serif;"><span id="f36" class="fs" style="display:inline-block;transform-origin:0 0;transform:scaleX(0.8933)">CRLF</span></div>
<div class="a" style="left:1348px;top:798px;font-size:12px;line-height:15px;color:#cccccc;font-family:'Liberation Sans',sans-serif;"><span id="f37" class="fs" style="display:inline-block;transform-origin:0 0;transform:scaleX(1.0054)">Properties</span></div>
<svg class="a" style="left:1418px;top:798px" width="14" height="14" viewBox="0 0 14 14"><circle cx="6.5" cy="6.5" r="2" stroke="#ccc" stroke-width="1.1" fill="none"/><path d="M5.5 0.8h2l0.4 1.7 1.3 0.6 1.5-0.9 1.4 1.4-0.9 1.5 0.6 1.3 1.7 0.4v2l-1.7 0.4-0.6 1.3 0.9 1.5-1.4 1.4-1.5-0.9-1.3 0.6-0.4 1.7h-2l-0.4-1.7-1.3-0.6-1.5 0.9-1.4-1.4 0.9-1.5-0.6-1.3-1.7-0.4v-2l1.7-0.4 0.6-1.3-0.9-1.5 1.4-1.4 1.5 0.9 1.3-0.6z" stroke="#ccc" stroke-width="1.1" fill="none" stroke-linejoin="round"/><circle cx="11" cy="11" r="2.6" fill="#181818"/><path d="M9.6 11h2.8" stroke="#ccc" stroke-width="1"/></svg>
<div class="a" style="left:1434px;top:798px;font-size:12px;line-height:15px;color:#cccccc;font-family:'Liberation Sans',sans-serif;"><span id="f38" class="fs" style="display:inline-block;transform-origin:0 0;transform:scaleX(1.0117)">Spell</span></div>
<svg class="a" style="left:1477px;top:797px" width="15" height="15" viewBox="0 0 15 15"><path d="M6 1.2h7.5v6.5H11" stroke="#cccccc" stroke-width="1.1" fill="none"/><circle cx="6" cy="6" r="2.8" stroke="#cccccc" stroke-width="1.1" fill="none"/><path d="M1 14c0.5-2.8 2.5-4.5 5-4.5s4.5 1.7 5 4.5" stroke="#cccccc" stroke-width="1.1" fill="none"/></svg>
<svg class="a" style="left:1508px;top:797px" width="14" height="15" viewBox="0 0 14 15"><path d="M2 11h10l-1.4-1.8V6A3.6 3.6 0 0 0 3.4 6v3.2z" stroke="#cccccc" stroke-width="1.1" fill="none" stroke-linejoin="round"/><path d="M5.5 12.8a1.6 1.6 0 0 0 3 0" stroke="#cccccc" stroke-width="1.1" fill="none"/></svg>
<div class="a" style="left:1433px;top:92.0px;width:6px;height:1.3px;background:#cccccc;opacity:0.38"></div>
<div class="a" style="left:1440px;top:92.0px;width:1px;height:1.3px;background:#e04444;opacity:0.38"></div>
<div class="a" style="left:1436px;top:93.64px;width:9px;height:1.3px;background:#cccccc;opacity:0.38"></div>
<div class="a" style="left:1436px;top:95.28px;width:22px;height:1.3px;background:#cccccc;opacity:0.38"></div>
<div class="a" style="left:1436px;top:96.92px;width:15px;height:1.3px;background:#cccccc;opacity:0.38"></div>
<div class="a" style="left:1436px;top:100.2px;width:22px;height:1.3px;background:#cccccc;opacity:0.38"></div>
<div class="a" style="left:1459px;top:100.2px;width:9px;height:1.3px;background:#ce9178;opacity:0.38"></div>
<div class="a" style="left:1436px;top:101.84px;width:22px;height:1.3px;background:#cccccc;opacity:0.38"></div>
<div class="a" style="left:1459px;top:101.84px;width:12px;height:1.3px;background:#ce9178;opacity:0.38"></div>
<div class="a" style="left:1436px;top:103.48px;width:29px;height:1.3px;background:#cccccc;opacity:0.38"></div>
<div class="a" style="left:1466px;top:103.48px;width:7px;height:1.3px;background:#ce9178;opacity:0.38"></div>
<div class="a" style="left:1436px;top:106.76px;width:12px;height:1.3px;background:#cccccc;opacity:0.38"></div>
<div class="a" style="left:1436px;top:110.03999999999999px;width:11px;height:1.3px;background:#cccccc;opacity:0.38"></div>
<div class="a" style="left:1436px;top:113.32px;width:9px;height:1.3px;background:#cccccc;opacity:0.38"></div>
<div class="a" style="left:1439px;top:114.96px;width:36px;height:1.3px;background:#cccccc;opacity:0.38"></div>
<div class="a" style="left:1436px;top:116.6px;width:1px;height:1.3px;background:#da70d6;opacity:0.38"></div>
<div class="a" style="left:1436px;top:119.88px;width:7px;height:1.3px;background:#569cd6;opacity:0.38"></div>
<div class="a" style="left:1444px;top:119.88px;width:22px;height:1.3px;background:#cccccc;opacity:0.38"></div>
<div class="a" style="left:1467px;top:119.88px;width:18px;height:1.3px;background:#6a9955;opacity:0.38"></div>
<div class="a" style="left:1436px;top:121.52px;width:7px;height:1.3px;background:#569cd6;opacity:0.38"></div>
<div class="a" style="left:1444px;top:121.52px;width:22px;height:1.3px;background:#cccccc;opacity:0.38"></div>
<div class="a" style="left:1467px;top:121.52px;width:18px;height:1.3px;background:#6a9955;opacity:0.38"></div>
<div class="a" style="left:1436px;top:124.8px;width:21px;height:1.3px;background:#cccccc;opacity:0.38"></div>
<div class="a" style="left:1436px;top:128.07999999999998px;width:14px;height:1.3px;background:#cccccc;opacity:0.38"></div>
<div class="a" style="left:1439px;top:129.72px;width:19px;height:1.3px;background:#cccccc;opacity:0.38"></div>
<div class="a" style="left:1439px;top:131.36px;width:52px;height:1.3px;background:#cccccc;opacity:0.38"></div>
<div class="a" style="left:1439px;top:133.0px;width:18px;height:1.3px;background:#cccccc;opacity:0.38"></div>
<div class="a" style="left:1436px;top:134.64px;width:1px;height:1.3px;background:#cccccc;opacity:0.38"></div>
<div class="a" style="left:1436px;top:137.92px;width:25px;height:1.3px;background:#cccccc;opacity:0.38"></div>
<div class="a" style="left:1439px;top:139.56px;width:7px;height:1.3px;background:#cccccc;opacity:0.38"></div>
<div class="a" style="left:1436px;top:141.2px;width:1px;height:1.3px;background:#cccccc;opacity:0.38"></div>
<div class="a" style="left:1433px;top:142.84px;width:1px;height:1.3px;background:#cccccc;opacity:0.38"></div>
<div class="a" style="left:58px;top:104px;width:86px;height:47px;background:transparent;border:6px solid #ff0000"></div>
<div class="a" style="left:523px;top:520px;width:162px;height:48px;background:transparent;border:6px solid #ff0000"></div>
<div class="a" style="left:601px;top:567px;width:7px;height:21px;background:#ff0000;"></div>
<div class="a" style="left:98px;top:581px;width:510px;height:7px;background:#ff0000;"></div>
<div class="a" style="left:98px;top:160px;width:6px;height:428px;background:#ff0000;"></div>
<svg class="a" style="left:90px;top:145px" width="22" height="22" viewBox="0 0 22 22"><polygon points="11,1 1.8,21 20.6,21" fill="#ff0000"/></svg>
</body></html>
